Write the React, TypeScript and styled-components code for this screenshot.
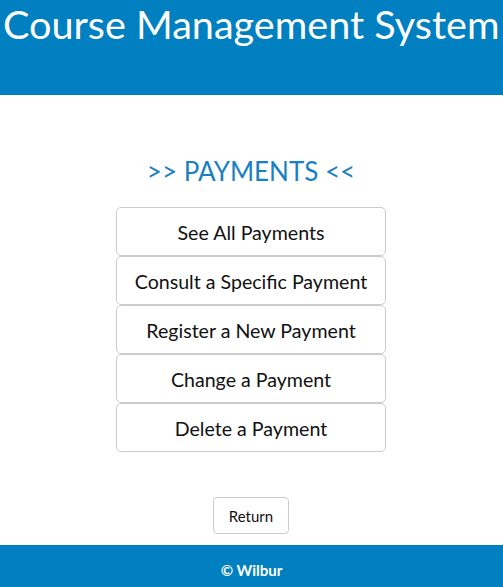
import React from "react";
import styled, { createGlobalStyle } from "styled-components";

const Global = createGlobalStyle`
  html, body { margin: 0; padding: 0; background: #fff; }
  body { font-family: Lato, "Open Sans", sans-serif; }
`;

const Header = styled.header`
  background: #0080c0;
  height: 95px;
  box-sizing: border-box;
  padding: 1px 0 0 3px;
`;

const Title = styled.h1`
  margin: 0;
  color: #fff;
  font-size: 39.6px;
  font-weight: 400;
  line-height: 46px;
  white-space: nowrap;
`;

const Main = styled.main`
  display: flex;
  flex-direction: column;
  align-items: center;
  padding: 56px 1px 0 0;
`;

const Heading = styled.h2`
  margin: 0 0 16px;
  color: #1a80c4;
  font-size: 26px;
  font-weight: 400;
  line-height: 40px;
`;

const Menu = styled.div`
  display: flex;
  flex-direction: column;
  width: 270px;
`;

const MenuButton = styled.button`
  height: 49px;
  box-sizing: border-box;
  background: #fff;
  border: 1px solid #ccc;
  border-radius: 5px;
  font-family: Lato, "Open Sans", sans-serif;
  font-size: 19.6px;
  color: #111;
  padding: 2px 0 0;
  margin: 0;
  cursor: pointer;
`;

const ReturnButton = styled.button`
  margin-top: 45px;
  height: 37px;
  padding: 0 15px;
  background: #fff;
  border: 1px solid #ccc;
  border-radius: 4px;
  font-family: Lato, "Open Sans", sans-serif;
  font-size: 15px;
  color: #111;
`;

const Footer = styled.footer`
  margin-top: 11px;
  background: #0080c0;
  height: 42px;
  box-sizing: border-box;
  padding-top: 8px;
  display: flex;
  align-items: center;
  justify-content: center;
  color: #fff;
  font-size: 15px;
  font-weight: 700;
`;

const items = [
  "See All Payments",
  "Consult a Specific Payment",
  "Register a New Payment",
  "Change a Payment",
  "Delete a Payment",
];

export default function App() {
  return (
    <>
      <Global />
      <Header>
        <Title>Course Management System</Title>
      </Header>
      <Main>
        <Heading>&gt;&gt; PAYMENTS &lt;&lt;</Heading>
        <Menu>
          {items.map((t) => (
            <MenuButton key={t}>{t}</MenuButton>
          ))}
        </Menu>
        <ReturnButton>Return</ReturnButton>
      </Main>
      <Footer>© Wilbur</Footer>
    </>
  );
}
